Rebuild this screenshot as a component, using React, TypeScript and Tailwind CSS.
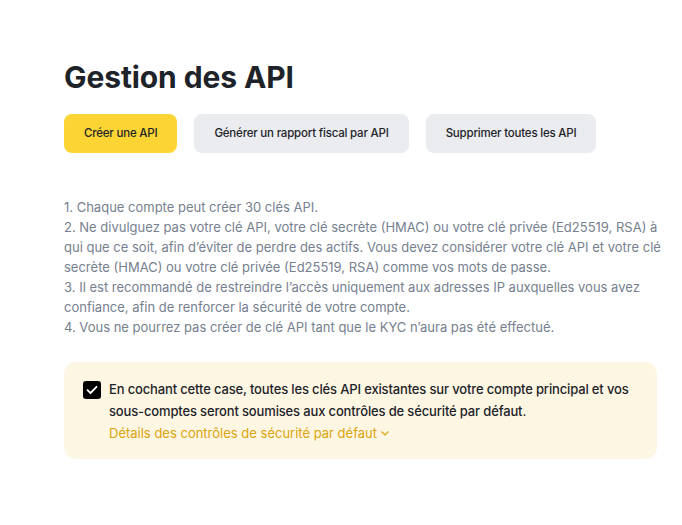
import { useState } from "react";

const notes = [
  "1. Chaque compte peut créer 30 clés API.",
  "2. Ne divulguez pas votre clé API, votre clé secrète (HMAC) ou votre clé privée (Ed25519, RSA) à qui que ce soit, afin d’éviter de perdre des actifs. Vous devez considérer votre clé API et votre clé secrète (HMAC) ou votre clé privée (Ed25519, RSA) comme vos mots de passe.",
  "3. Il est recommandé de restreindre l’accès uniquement aux adresses IP auxquelles vous avez confiance, afin de renforcer la sécurité de votre compte.",
  "4. Vous ne pourrez pas créer de clé API tant que le KYC n’aura pas été effectué.",
];

export default function App() {
  const [checked, setChecked] = useState(true);

  return (
    <div
      className="min-h-screen bg-white"
      style={{ fontFamily: 'Inter, "Liberation Sans", sans-serif' }}
    >
      <div className="pl-[64px] pt-[58px] w-[662px]">
        <h1 className="text-[30px] font-bold leading-[38px] text-[#1e2329] tracking-[-0.1px]">
          Gestion des API
        </h1>

        <div className="mt-[18px] flex gap-[17px]">
          <button className="h-[39px] px-[20px] rounded-[8px] bg-[#fcd535] text-[11.5px] tracking-[-0.2px] font-medium text-[#1e2329]">
            Créer une API
          </button>
          <button className="h-[39px] px-[20px] rounded-[8px] bg-[#eaecef] text-[11.5px] tracking-[-0.2px] font-medium text-[#1e2329]">
            Générer un rapport fiscal par API
          </button>
          <button className="h-[39px] px-[20px] rounded-[8px] bg-[#eaecef] text-[11.5px] tracking-[-0.2px] font-medium text-[#1e2329]">
            Supprimer toutes les API
          </button>
        </div>

        <div className="mt-[44px] text-[13px] leading-[20px] text-[#76808f]">
          {notes.map((n) => (
            <p key={n}>{n}</p>
          ))}
        </div>

        <div className="mt-[25px] w-[593px] rounded-[12px] bg-[#fdf6e3] pl-[19px] pr-[10px] pt-[16px] pb-[16px] flex gap-[8px]">
          <button
            onClick={() => setChecked(!checked)}
            className={`mt-[3px] shrink-0 w-[18px] h-[18px] rounded-[3px] flex items-center justify-center ${
              checked ? "bg-black" : "border border-[#929aa5] bg-white"
            }`}
          >
            {checked && (
              <svg width="12" height="10" viewBox="0 0 12 10" fill="none">
                <path
                  d="M1.5 5.2L4.5 8L10.5 1.8"
                  stroke="white"
                  strokeWidth="1.8"
                  strokeLinecap="round"
                  strokeLinejoin="round"
                />
              </svg>
            )}
          </button>
          <div>
            <p className="text-[13px] leading-[22px] font-medium tracking-[-0.15px] text-[#1e2329]">
              En cochant cette case, toutes les clés API existantes sur votre compte principal et vos
              sous-comptes seront soumises aux contrôles de sécurité par défaut.
            </p>
            <button className="mt-[1px] flex items-center gap-[3px] text-[13px] leading-[20px] text-[#dba40a]">
              Détails des contrôles de sécurité par défaut
              <svg width="10" height="10" viewBox="0 0 10 10" fill="none">
                <path d="M1.5 3.5L5 7L8.5 3.5" stroke="#dba40a" strokeWidth="1.1" />
              </svg>
            </button>
          </div>
        </div>
      </div>
    </div>
  );
}
